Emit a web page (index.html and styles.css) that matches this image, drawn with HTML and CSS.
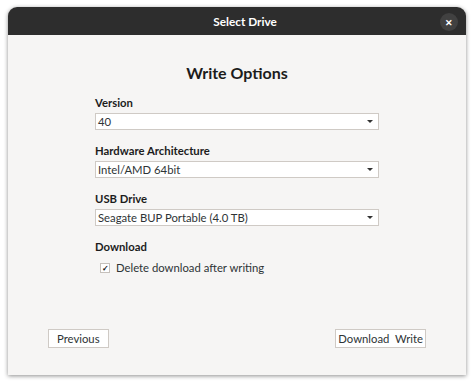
FILE: index.html
```html
<html>
<head>
  <title>Select Drive</title>
  <link rel="stylesheet" href="styles.css">
</head>
<body>
  <div class="window">
    <div class="titlebar">
      <span class="title">Select Drive</span>
      <span class="close">&#x2715;</span>
    </div>
    <div class="content">
      <h1>Write Options</h1>
      <div class="form">
        <div class="field">
          <div class="label">Version</div>
          <div class="select"><span>40</span><span class="arrow"></span></div>
        </div>
        <div class="field">
          <div class="label">Hardware Architecture</div>
          <div class="select"><span>Intel/AMD 64bit</span><span class="arrow"></span></div>
        </div>
        <div class="field">
          <div class="label">USB Drive</div>
          <div class="select"><span>Seagate BUP Portable (4.0 TB)</span><span class="arrow"></span></div>
        </div>
        <div class="field">
          <div class="label">Download</div>
          <label class="check"><span class="box">&#x2713;</span>Delete download after writing</label>
        </div>
      </div>
      <div class="buttons">
        <button>Previous</button>
        <button class="tight">Download&nbsp; Write</button>
      </div>
    </div>
  </div>
</body>
</html>
```

FILE: styles.css
```css
body {
  margin: 0;
  padding: 7px 8px 8px 8px;
  background: #fff;
  font: 11.3px Lato, "Noto Sans", sans-serif;
  color: #2e3436;
}
.window {
  height: 368px;
  display: flex;
  flex-direction: column;
  border-radius: 9px 9px 0 0;
  background: #f6f5f4;
  box-shadow: 0 1px 4px rgba(0,0,0,.45);
  overflow: hidden;
}
.titlebar {
  height: 28px;
  background: #2d2d2d;
  color: #fff;
  display: flex;
  align-items: center;
  justify-content: center;
  padding-left: 16px;
  position: relative;
  flex-shrink: 0;
}
.title {
  font-weight: bold;
  font-size: 11.8px;
}
.close {
  position: absolute;
  right: 8px;
  top: 6px;
  width: 18px;
  height: 18px;
  border-radius: 50%;
  background: #414141;
  font-size: 9px;
  font-weight: bold;
  display: flex;
  align-items: center;
  justify-content: center;
}
.content {
  flex: 1;
  display: flex;
  flex-direction: column;
  padding: 0 40px 27px 40px;
}
h1 {
  margin: 28px 0 13px 0;
  line-height: 20px;
  text-align: center;
  font-size: 16px;
  font-weight: bold;
  color: #1c1c1c;
}
.form {
  margin: 0 47px;
  display: flex;
  flex-direction: column;
  gap: 14px;
}
.label {
  font-weight: bold;
  color: #1c1c1c;
  line-height: 14px;
  margin-bottom: 3px;
}
.select {
  height: 15px;
  background: #fff;
  border: 1px solid #cfcac5;
  display: flex;
  align-items: center;
  justify-content: space-between;
  padding: 0 5px 0 2px;
  color: #2e3436;
}
.arrow {
  width: 0;
  height: 0;
  border-left: 3px solid transparent;
  border-right: 3px solid transparent;
  border-top: 3px solid #333;
}
.check {
  display: flex;
  align-items: center;
  line-height: 14px;
  margin-top: 7px;
  margin-left: 5px;
  gap: 6px;
}
.box {
  width: 8px;
  height: 8px;
  border: 1px solid #c5c0bb;
  background: #fff;
  font-size: 8px;
  font-weight: bold;
  line-height: 8px;
  text-align: center;
  color: #111;
}
.buttons {
  margin-top: auto;
  display: flex;
  justify-content: space-between;
  align-items: center;
}
button {
  font: 11.3px Lato, "Noto Sans", sans-serif;
  color: #2e3436;
  background: #fff;
  border: 1px solid #cfcac5;
  height: 19px;
  padding: 0 8px;
}
button.tight {
  padding: 0 2px;
}
```
